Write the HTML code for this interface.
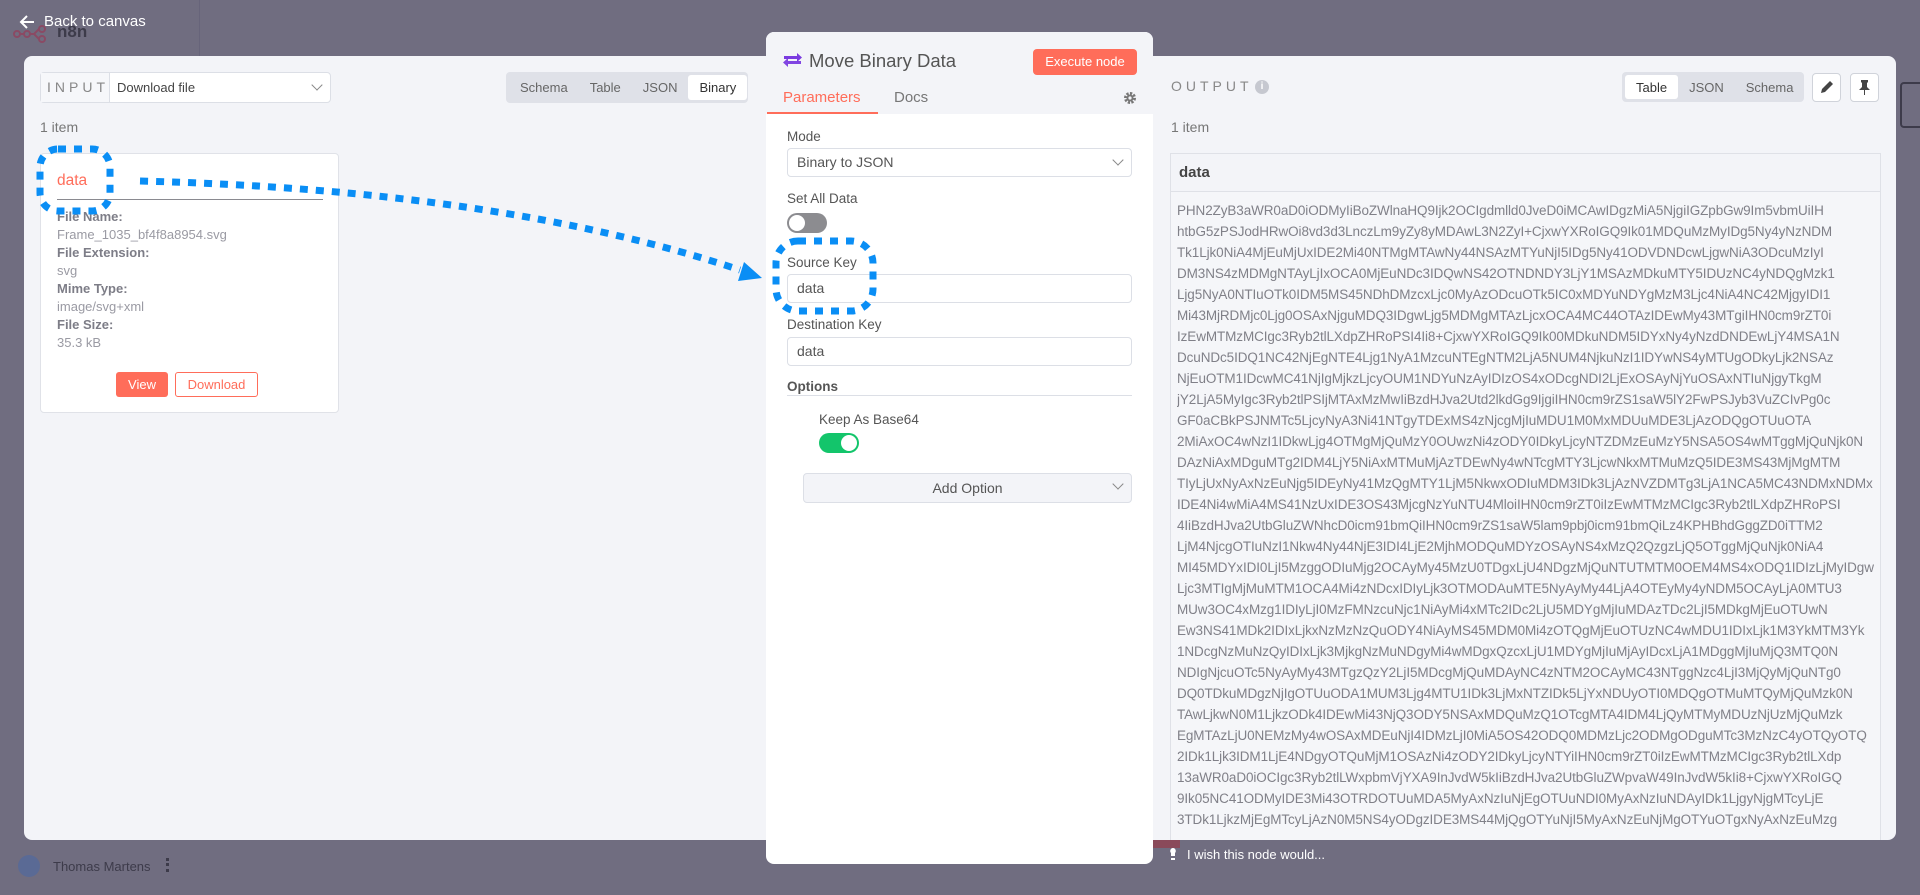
<!DOCTYPE html>
<html><head><meta charset="utf-8"><style>
*{box-sizing:border-box;margin:0;padding:0}
body{width:1920px;height:895px;overflow:hidden;background:#706d80;font-family:"Liberation Sans",sans-serif;position:relative;color:#555}
.abs{position:absolute}
.panel{position:absolute;background:#f3f4f8;border-radius:8px}
.tabs{position:absolute;background:#dfe1e8;border-radius:4px;display:flex;padding:3px;gap:0}
.tabs div{font-size:13px;color:#666;padding:0 11px;line-height:25px;border-radius:3px}
.tabs .on{background:#fff;color:#333}
.lab{position:absolute;font-size:13.5px;color:#555}
.inp{position:absolute;left:787px;width:345px;height:29px;border:1px solid #dcdfe6;border-radius:4px;background:#fff;font-size:14px;color:#555;padding-left:9px;line-height:27px}
.chev{position:absolute;width:8px;height:8px;border-right:1px solid #888;border-bottom:1px solid #888;transform:rotate(45deg)}
.kv{position:absolute;left:57px;font-size:13px;line-height:18px}
.kv b{color:#7d7d87;font-weight:bold;display:block}
.kv span{color:#9a9aa3;display:block}
.data{position:absolute;left:37px;top:144px;width:698px;overflow:hidden;font-size:13.5px;line-height:21px;color:#808088;white-space:nowrap;letter-spacing:-0.1px}
</style></head><body>
<!-- top bar -->
<div class="abs" style="left:199px;top:0;width:1px;height:56px;background:#67647a"></div>
<svg class="abs" style="left:12px;top:24px" width="40" height="20"><g fill="none" stroke="#8a4a64" stroke-width="2"><circle cx="5" cy="10" r="3"/><circle cx="15" cy="10" r="3"/><circle cx="30" cy="5" r="3"/><circle cx="30" cy="15" r="3"/><path d="M8 10h4M18 10h4l5-5M22 10l5 5"/></g></svg>
<div class="abs" style="left:57px;top:22px;font-size:17px;font-weight:bold;color:#3d3b4a">n8n</div>
<svg class="abs" style="left:19px;top:15px" width="16" height="14"><path d="M8 1L2 7l6 6M2 7h13" stroke="#fff" stroke-width="2" fill="none"/></svg>
<div class="abs" style="left:44px;top:13px;font-size:15px;color:#fff">Back to canvas</div>

<!-- left panel -->
<div class="panel" style="left:24px;top:56px;width:760px;height:784px"></div>
<div class="abs" style="left:40px;top:72px;width:291px;height:31px;border:1px solid #dcdfe6;border-radius:4px;background:#fff"></div>
<div class="abs" style="left:41px;top:73px;width:69px;height:29px;background:#f6f7fa;border-right:1px solid #dcdfe6;font-size:14px;letter-spacing:4px;color:#888;line-height:29px;padding-left:6px">INPUT</div>
<div class="abs" style="left:117px;top:80px;font-size:13px;color:#444">Download file</div>
<div class="chev" style="left:313px;top:81px"></div>
<div class="tabs" style="left:506px;top:72px;width:242px;height:31px"><div>Schema</div><div>Table</div><div>JSON</div><div class="on">Binary</div></div>
<div class="abs" style="left:40px;top:119px;font-size:14px;color:#777">1 item</div>
<div class="abs" style="left:40px;top:153px;width:299px;height:260px;background:#fff;border:1px solid #e0e2e8;border-radius:4px"></div>
<div class="abs" style="left:57px;top:172px;font-size:15.5px;color:#ff6d5a">data</div>
<div class="abs" style="left:57px;top:199px;width:266px;height:1px;background:#8a8a90"></div>
<div class="kv" style="top:208px"><b>File Name:</b><span>Frame_1035_bf4f8a8954.svg</span><b>File Extension:</b><span>svg</span><b>Mime Type:</b><span>image/svg+xml</span><b>File Size:</b><span>35.3 kB</span></div>
<div class="abs" style="left:116px;top:372px;width:52px;height:25px;background:#ff6d5a;border-radius:3px;color:#fff;font-size:13px;text-align:center;line-height:25px">View</div>
<div class="abs" style="left:175px;top:372px;width:83px;height:25px;border:1px solid #ff6d5a;border-radius:3px;color:#ff6d5a;font-size:13px;text-align:center;line-height:23px;background:#fff">Download</div>

<!-- right panel -->
<div class="panel" style="left:1140px;top:56px;width:756px;height:784px;overflow:hidden">
<div class="abs" style="left:31px;top:22px;font-size:14px;letter-spacing:4px;color:#888">OUTPUT</div>
<div class="abs" style="left:115px;top:24px;width:14px;height:14px;border-radius:50%;background:#c6c8d0;color:#fff;font-size:10px;text-align:center;line-height:14px;font-weight:bold">i</div>
<div class="tabs" style="left:482px;top:16px;width:182px;height:30px"><div class="on">Table</div><div>JSON</div><div>Schema</div></div>
<div class="abs" style="left:672px;top:17px;width:29px;height:29px;border:1px solid #d0d3da;border-radius:4px;background:#fff"></div>
<svg class="abs" style="left:679px;top:24px" width="15" height="15"><path d="M2 13l1-4 8-8 3 3-8 8z" fill="#444"/></svg>
<div class="abs" style="left:710px;top:17px;width:29px;height:29px;border:1px solid #d0d3da;border-radius:4px;background:#fff"></div>
<svg class="abs" style="left:717px;top:23px" width="15" height="17"><path d="M4 1h7v2l-1 1v4l3 3H2l3-3V4L4 3z M7 11v5h1v-5z" fill="#444"/></svg>
<div class="abs" style="left:31px;top:63px;font-size:14px;color:#777">1 item</div>
<div class="abs" style="left:30px;top:97px;width:711px;height:760px;border:1px solid #dfe1e7;background:#f5f6f9"></div>
<div class="abs" style="left:31px;top:98px;width:709px;height:38px;border-bottom:1px solid #dfe1e7;background:#f3f4f8"></div>
<div class="abs" style="left:39px;top:108px;font-size:15px;font-weight:bold;color:#444">data</div>
<div class="data">PHN2ZyB3aWR0aD0iODMyIiBoZWlnaHQ9Ijk2OCIgdmlld0JveD0iMCAwIDgzMiA5NjgiIGZpbGw9Im5vbmUiIH<br>htbG5zPSJodHRwOi8vd3d3LnczLm9yZy8yMDAwL3N2ZyI+CjxwYXRoIGQ9Ik01MDQuMzMyIDg5Ny4yNzNDM<br>Tk1Ljk0NiA4MjEuMjUxIDE2Mi40NTMgMTAwNy44NSAzMTYuNjI5IDg5Ny41ODVDNDcwLjgwNiA3ODcuMzIyI<br>DM3NS4zMDMgNTAyLjIxOCA0MjEuNDc3IDQwNS42OTNDNDY3LjY1MSAzMDkuMTY5IDUzNC4yNDQgMzk1<br>Ljg5NyA0NTIuOTk0IDM5MS45NDhDMzcxLjc0MyAzODcuOTk5IC0xMDYuNDYgMzM3Ljc4NiA4NC42MjgyIDI1<br>Mi43MjRDMjc0Ljg0OSAxNjguMDQ3IDgwLjg5MDMgMTAzLjcxOCA4MC44OTAzIDEwMy43MTgiIHN0cm9rZT0i<br>IzEwMTMzMCIgc3Ryb2tlLXdpZHRoPSI4Ii8+CjxwYXRoIGQ9Ik00MDkuNDM5IDYxNy4yNzdDNDEwLjY4MSA1N<br>DcuNDc5IDQ1NC42NjEgNTE4Ljg1NyA1MzcuNTEgNTM2LjA5NUM4NjkuNzI1IDYwNS4yMTUgODkyLjk2NSAz<br>NjEuOTM1IDcwMC41NjIgMjkzLjcyOUM1NDYuNzAyIDIzOS4xODcgNDI2LjExOSAyNjYuOSAxNTIuNjgyTkgM<br>jY2LjA5MyIgc3Ryb2tlPSIjMTAxMzMwIiBzdHJva2Utd2lkdGg9IjgiIHN0cm9rZS1saW5lY2FwPSJyb3VuZCIvPg0c<br>GF0aCBkPSJNMTc5LjcyNyA3Ni41NTgyTDExMS4zNjcgMjIuMDU1M0MxMDUuMDE3LjAzODQgOTUuOTA<br>2MiAxOC4wNzI1IDkwLjg4OTMgMjQuMzY0OUwzNi4zODY0IDkyLjcyNTZDMzEuMzY5NSA5OS4wMTggMjQuNjk0N<br>DAzNiAxMDguMTg2IDM4LjY5NiAxMTMuMjAzTDEwNy4wNTcgMTY3LjcwNkxMTMuMzQ5IDE3MS43MjMgMTM<br>TIyLjUxNyAxNzEuNjg5IDEyNy41MzQgMTY1LjM5NkwxODIuMDM3IDk3LjAzNVZDMTg3LjA1NCA5MC43NDMxNDMx<br>IDE4Ni4wMiA4MS41NzUxIDE3OS43MjcgNzYuNTU4MloiIHN0cm9rZT0iIzEwMTMzMCIgc3Ryb2tlLXdpZHRoPSI<br>4IiBzdHJva2UtbGluZWNhcD0icm91bmQiIHN0cm9rZS1saW5lam9pbj0icm91bmQiLz4KPHBhdGggZD0iTTM2<br>LjM4NjcgOTIuNzI1Nkw4Ny44NjE3IDI4LjE2MjhMODQuMDYzOSAyNS4xMzQ2QzgzLjQ5OTggMjQuNjk0NiA4<br>MI45MDYxIDI0LjI5MzggODIuMjg2OCAyMy45MzU0TDgxLjU4NDgzMjQuNTUTMTM0OEM4MS4xODQ1IDIzLjMyIDgw<br>Ljc3MTIgMjMuMTM1OCA4Mi4zNDcxIDIyLjk3OTMODAuMTE5NyAyMy44LjA4OTEyMy4yNDM5OCAyLjA0MTU3<br>MUw3OC4xMzg1IDIyLjI0MzFMNzcuNjc1NiAyMi4xMTc2IDc2LjU5MDYgMjIuMDAzTDc2LjI5MDkgMjEuOTUwN<br>Ew3NS41MDk2IDIxLjkxNzMzNzQuODY4NiAyMS45MDM0Mi4zOTQgMjEuOTUzNC4wMDU1IDIxLjk1M3YkMTM3Yk<br>1NDcgNzMuNzQyIDIxLjk3MjkgNzMuNDgyMi4wMDgxQzcxLjU1MDYgMjIuMjAyIDcxLjA1MDggMjIuMjQ3MTQ0N<br>NDIgNjcuOTc5NyAyMy43MTgzQzY2LjI5MDcgMjQuMDAyNC4zNTM2OCAyMC43NTggNzc4LjI3MjQyMjQuNTg0<br>DQ0TDkuMDgzNjIgOTUuODA1MUM3Ljg4MTU1IDk3LjMxNTZIDk5LjYxNDUyOTI0MDQgOTMuMTQyMjQuMzk0N<br>TAwLjkwN0M1LjkzODk4IDEwMi43NjQ3ODY5NSAxMDQuMzQ1OTcgMTA4IDM4LjQyMTMyMDUzNjUzMjQuMzk<br>EgMTAzLjU0NEMzMy4wOSAxMDEuNjI4IDMzLjI0MiA5OS42ODQ0MDMzLjc2ODMgODguMTc3MzNzC4yOTQyOTQ<br>2IDk1Ljk3IDM1LjE4NDgyOTQuMjM1OSAzNi4zODY2IDkyLjcyNTYiIHN0cm9rZT0iIzEwMTMzMCIgc3Ryb2tlLXdp<br>13aWR0aD0iOCIgc3Ryb2tlLWxpbmVjYXA9InJvdW5kIiBzdHJva2UtbGluZWpvaW49InJvdW5kIi8+CjxwYXRoIGQ<br>9Ik05NC41ODMyIDE3Mi43OTRDOTUuMDA5MyAxNzIuNjEgOTUuNDI0MyAxNzIuNDAyIDk1LjgyNjgMTcyLjE<br>3TDk1LjkzMjEgMTcyLjAzN0M5NS4yODgzIDE3MS44MjQgOTYuNjI5MyAxNzEuNjMgOTYuOTgxNyAxNzEuMzg</div>
</div>

<!-- middle panel -->
<div class="abs" style="left:766px;top:32px;width:387px;height:832px;background:#fff;border-radius:8px;overflow:hidden">
 <div style="position:absolute;left:0;top:0;width:387px;height:82px;background:#f3f4f8"></div>
</div>
<svg class="abs" style="left:783px;top:52px" width="19" height="16"><g fill="#7a3be0"><path d="M1 4h13V1l5 4.5-5 4.5V7H1z"/><path d="M18 12H5v3L0 10.5 5 6v3h13z" opacity=".95"/></g></svg>
<div class="abs" style="left:809px;top:50px;font-size:18.5px;color:#555">Move Binary Data</div>
<div class="abs" style="left:1033px;top:49px;width:104px;height:26px;background:#ff6d5a;border-radius:4px;color:#fff;font-size:13px;text-align:center;line-height:26px">Execute node</div>
<div class="abs" style="left:783px;top:89px;font-size:15px;color:#ff6d5a">Parameters</div>
<div class="abs" style="left:894px;top:89px;font-size:15px;color:#777">Docs</div>
<div class="abs" style="left:767px;top:112px;width:111px;height:2px;background:#ff6d5a"></div>
<svg class="abs" style="left:1123px;top:91px" width="14" height="14"><circle cx="7" cy="7" r="4.5" fill="none" stroke="#777" stroke-width="3" stroke-dasharray="2.2 1.3"/><circle cx="7" cy="7" r="3.5" fill="#777"/><circle cx="7" cy="7" r="1.6" fill="#f3f4f8"/></svg>
<div class="lab" style="left:787px;top:129px">Mode</div>
<div class="inp" style="top:148px">Binary to JSON</div>
<div class="chev" style="left:1114px;top:156px"></div>
<div class="lab" style="left:787px;top:191px">Set All Data</div>
<div class="abs" style="left:787px;top:213px;width:40px;height:20px;border-radius:10px;background:#8c8c90"><div style="position:absolute;left:2px;top:2px;width:16px;height:16px;border-radius:50%;background:#fff"></div></div>
<div class="lab" style="left:787px;top:255px">Source Key</div>
<div class="inp" style="top:274px">data</div>
<div class="lab" style="left:787px;top:317px">Destination Key</div>
<div class="inp" style="top:337px">data</div>
<div class="lab" style="left:787px;top:379px;font-weight:bold">Options</div>
<div class="abs" style="left:787px;top:395px;width:345px;height:1px;background:#dcdfe6"></div>
<div class="lab" style="left:819px;top:412px">Keep As Base64</div>
<div class="abs" style="left:819px;top:433px;width:40px;height:20px;border-radius:10px;background:#13c56b"><div style="position:absolute;right:2px;top:2px;width:16px;height:16px;border-radius:50%;background:#fff"></div></div>
<div class="abs" style="left:803px;top:473px;width:329px;height:30px;border:1px solid #dcdfe6;border-radius:4px;background:#f3f4f8;font-size:14px;color:#555;text-align:center;line-height:28px">Add Option</div>
<div class="chev" style="left:1114px;top:480px"></div>

<!-- bottom -->
<div class="abs" style="left:1153px;top:840px;width:27px;height:8px;background:#8a4a5a"></div>
<div class="abs" style="left:18px;top:855px;width:22px;height:22px;border-radius:50%;background:#5a6a95"></div>
<div class="abs" style="left:53px;top:859px;font-size:13px;color:#3d3b4a">Thomas Martens</div>
<div class="abs" style="left:166px;top:858px;width:3px;height:14px;border-left:3px dotted #3d3b4a"></div>
<svg class="abs" style="left:1169px;top:847px" width="8" height="14"><path d="M4 1a3 3 0 0 1 2 5v3H2V6a3 3 0 0 1 2-5zM2 11h4v2H2z" fill="#fff"/></svg>
<div class="abs" style="left:1187px;top:847px;font-size:13px;color:#fff">I wish this node would...</div>
<div class="abs" style="left:1900px;top:82px;width:30px;height:46px;border:2px solid #3d3b4a;border-radius:4px"></div>

<!-- annotations -->
<svg class="abs" style="left:0;top:0" width="1920" height="895">
<g fill="none" stroke="#0a8ef5" stroke-width="7" stroke-dasharray="8 8">
<rect x="40" y="149" width="70" height="62" rx="18"/>
<rect x="776" y="241" width="97" height="70" rx="22"/>
<path d="M140 181 Q 500 190 740 270"/>
</g>
<path d="M744 262 L762 278 L738 281 Z" fill="#0a8ef5"/>
</svg>
</body></html>
